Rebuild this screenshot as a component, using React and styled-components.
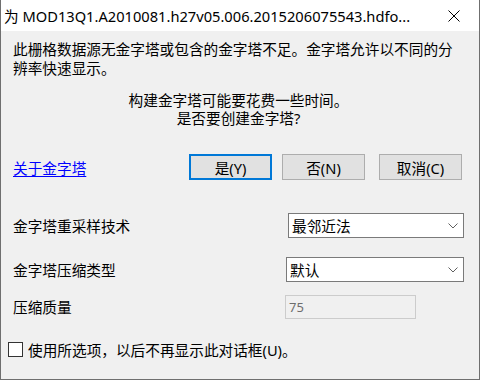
import React from "react";
import styled, { createGlobalStyle } from "styled-components";

const GlobalStyle = createGlobalStyle`
  html, body {
    margin: 0;
    padding: 0;
    background: #f0f0f0;
  }
  * {
    box-sizing: border-box;
  }
`;

const FONT = `"Segoe UI", "Noto Sans", "Noto Sans CJK SC", sans-serif`;

const Window = styled.div`
  width: 480px;
  height: 380px;
  display: flex;
  flex-direction: column;
  background: #f0f0f0;
  border: 1px solid #6f6f6f;
  border-top: none;
  font-family: ${FONT};
  font-size: 14.67px;
  color: #000;
`;

const TitleBar = styled.div`
  height: 31px;
  flex-shrink: 0;
  display: flex;
  align-items: center;
  justify-content: space-between;
  background: #fff;
  padding: 0 0 0 3px;
`;

const Title = styled.div`
  font-size: 14.67px;
  white-space: nowrap;
  color: #000;
`;

const CloseButton = styled.div`
  width: 46px;
  height: 31px;
  display: flex;
  align-items: center;
  justify-content: center;
  margin-right: 2px;
`;

const Body = styled.div`
  flex: 1;
  display: flex;
  flex-direction: column;
  padding: 9px 15px 0 12px;
`;

const Message = styled.p`
  margin: 0;
  line-height: 19px;
`;

const Question = styled.p`
  margin: 13px 0 0;
  line-height: 18px;
  text-align: center;
`;

const ButtonRow = styled.div`
  display: flex;
  align-items: center;
  margin-top: 27px;
  padding-right: 2px;
  height: 26px;
`;

const Link = styled.a`
  color: #0000ff;
  text-decoration: underline;
  text-underline-offset: 2px;
  cursor: pointer;
  flex: 1;
`;

const Button = styled.button`
  width: 83px;
  height: 26px;
  margin-left: ${(p) => p.$gap}px;
  font: inherit;
  color: #000;
  background: #e1e1e1;
  border: ${(p) => (p.$primary ? "2px solid #0078d7" : "1px solid #adadad")};
  padding: 0;
  display: flex;
  align-items: center;
  justify-content: center;
`;

const FieldRow = styled.div`
  display: flex;
  align-items: center;
  justify-content: space-between;
  margin-top: ${(p) => p.$top}px;
`;

const Label = styled.span`
  line-height: 20px;
`;

const Select = styled.div`
  width: ${(p) => p.$width}px;
  height: 25px;
  background: #fff;
  border: 1px solid #7a7a7a;
  display: flex;
  align-items: center;
  justify-content: space-between;
  padding: 0 5px 0 3px;
`;

const ReadOnlyInput = styled.div`
  width: 131px;
  height: 24px;
  margin-right: 48px;
  background: #f0f0f0;
  border: 1px solid #cccccc;
  display: flex;
  align-items: center;
  padding: 0 3px;
  color: #6d6d6d;
  font-size: 13px;
`;

const CheckRow = styled.label`
  display: flex;
  align-items: center;
  gap: 5px;
  margin: 20px 0 0 -5px;
`;

const Box = styled.span`
  width: 15px;
  height: 15px;
  background: #fff;
  border: 1px solid #333;
  display: inline-block;
`;

const Chevron = () => (
  <svg width="10" height="6" viewBox="0 0 10 6">
    <path d="M0.5 0.5 L5 5 L9.5 0.5" fill="none" stroke="#606060" strokeWidth="1" />
  </svg>
);

const CloseIcon = () => (
  <svg width="12" height="12" viewBox="0 0 12 12">
    <path d="M0.5 0.5 L11.5 11.5 M11.5 0.5 L0.5 11.5" stroke="#000" strokeWidth="1" />
  </svg>
);

const App = () => {
  return (
    <>
      <GlobalStyle />
      <Window>
        <TitleBar>
          <Title>为 MOD13Q1.A2010081.h27v05.006.2015206075543.hdfo...</Title>
          <CloseButton>
            <CloseIcon />
          </CloseButton>
        </TitleBar>
        <Body>
          <Message>
            此栅格数据源无金字塔或包含的金字塔不足。金字塔允许以不同的分辨率快速显示。
          </Message>
          <Question>
            构建金字塔可能要花费一些时间。
            <br />
            是否要创建金字塔?
          </Question>
          <ButtonRow>
            <Link>关于金字塔</Link>
            <Button $primary $gap={0}>是(Y)</Button>
            <Button $gap={10}>否(N)</Button>
            <Button $gap={14}>取消(C)</Button>
          </ButtonRow>
          <FieldRow $top={33}>
            <Label>金字塔重采样技术</Label>
            <Select $width={176}>
              <span>最邻近法</span>
              <Chevron />
            </Select>
          </FieldRow>
          <FieldRow $top={19}>
            <Label>金字塔压缩类型</Label>
            <Select $width={178}>
              <span>默认</span>
              <Chevron />
            </Select>
          </FieldRow>
          <FieldRow $top={13}>
            <Label>压缩质量</Label>
            <ReadOnlyInput>75</ReadOnlyInput>
          </FieldRow>
          <CheckRow>
            <Box />
            <span>使用所选项，以后不再显示此对话框(U)。</span>
          </CheckRow>
        </Body>
      </Window>
    </>
  );
};

export default App;
